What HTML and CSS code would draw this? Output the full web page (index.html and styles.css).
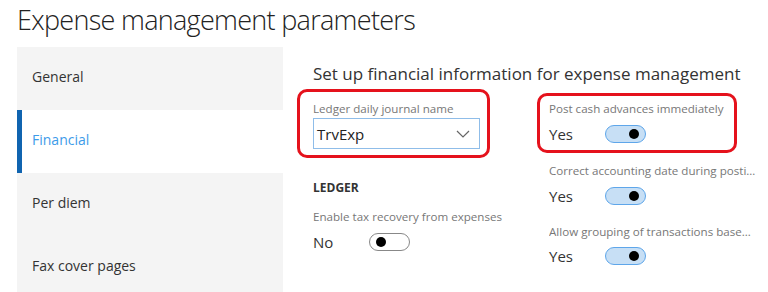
FILE: index.html
```html
<!DOCTYPE html>
<html lang="en">
<head>
    <meta charset="UTF-8">
    <title>Expense management parameters</title>
    <link rel="stylesheet" href="styles.css">
</head>
<body>

<div class="title">Expense management parameters</div>

<div class="layout">
    <div class="nav">
        <div class="nav-item">General</div>
        <div class="nav-item active">Financial</div>
        <div class="nav-item">Per diem</div>
        <div class="nav-item">Fax cover pages</div>
    </div>

    <div class="main">
        <div class="heading">Set up financial information for expense management</div>
        <div class="columns">
            <div class="col col-left">
                <div class="field highlight box-journal">
                    <div class="label">Ledger daily journal name</div>
                    <div class="select">
                        <span>TrvExp</span>
                        <svg width="14" height="8" viewBox="0 0 14 8"><polyline points="1,1 7,7 13,1" fill="none" stroke="#666" stroke-width="1.2"/></svg>
                    </div>
                </div>
                <div class="group-title">LEDGER</div>
                <div class="field field-tax">
                    <div class="label">Enable tax recovery from expenses</div>
                    <div class="value">
                        <span class="value-text">No</span>
                        <span class="toggle"><span class="knob"></span></span>
                    </div>
                </div>
            </div>

            <div class="col col-right">
                <div class="field highlight box-cash">
                    <div class="label">Post cash advances immediately</div>
                    <div class="value">
                        <span class="value-text">Yes</span>
                        <span class="toggle on"><span class="knob"></span></span>
                    </div>
                </div>
                <div class="field field-date">
                    <div class="label">Correct accounting date during posting</div>
                    <div class="value">
                        <span class="value-text">Yes</span>
                        <span class="toggle on"><span class="knob"></span></span>
                    </div>
                </div>
                <div class="field field-group">
                    <div class="label">Allow grouping of transactions based on dimensions</div>
                    <div class="value">
                        <span class="value-text">Yes</span>
                        <span class="toggle on"><span class="knob"></span></span>
                    </div>
                </div>
            </div>
        </div>
    </div>
</div>

</body>
</html>
```

FILE: styles.css
```css
body {
    margin: 0;
    background: #fff;
    font-family: "Open Sans", "Noto Sans", sans-serif;
    color: #333;
    overflow: hidden;
}
.title {
    height: 47px;
    padding-left: 17px;
    font-size: 27px;
    font-weight: 300;
    letter-spacing: -0.7px;
    line-height: 40px;
    color: #222;
}
.layout {
    display: flex;
}
.nav {
    width: 266px;
    margin-left: 17px;
    background: #f4f4f4;
}
.nav-item {
    height: 63px;
    box-sizing: border-box;
    display: flex;
    align-items: center;
    padding-left: 15px;
    padding-bottom: 4px;
    font-size: 14px;
    color: #333;
}
.nav-item.active {
    background: #fff;
    border-left: 5px solid #1064b0;
    padding-left: 10px;
    color: #3d9be9;
}
.main {
    padding-top: 15px;
    padding-left: 14px;
}
.heading {
    padding-left: 16px;
    font-size: 17px;
    line-height: 24px;
    color: #333;
}
.columns {
    display: flex;
    gap: 47px;
}
.col-left {
    width: 193px;
}
.col-right {
    width: 200px;
}
.label {
    font-size: 11.6px;
    line-height: 16px;
    color: #777;
    white-space: nowrap;
    overflow: hidden;
    text-overflow: ellipsis;
}
.highlight {
    border: 3px solid #e5121c;
    border-radius: 10px;
}
.box-journal {
    margin-top: 3px;
    padding: 9px 7px 6px 13px;
}
.select {
    margin-top: 1px;
    height: 31px;
    box-sizing: border-box;
    border: 1px solid #8fbde9;
    display: flex;
    align-items: center;
    justify-content: space-between;
    padding: 0 9px 0 3px;
    font-size: 15px;
    color: #222;
}
.box-cash {
    margin-top: 7px;
    padding: 5px 0 0 9px;
    height: 49px;
}
.value {
    display: flex;
    align-items: center;
    height: 22px;
    margin-top: 6px;
}
.value-text {
    width: 56px;
    font-size: 15px;
    color: #333;
}
.toggle {
    width: 41px;
    height: 18px;
    box-sizing: border-box;
    border: 1.5px solid #888;
    border-radius: 9px;
    background: #fff;
    display: flex;
    align-items: center;
    padding: 0 6px;
}
.toggle.on {
    background: #c7dff5;
    border-color: #5ea6ea;
    justify-content: flex-end;
}
.knob {
    width: 10px;
    height: 10px;
    border-radius: 50%;
    background: #000;
}
.group-title {
    margin-top: 22px;
    padding-left: 16px;
    font-size: 12px;
    font-weight: bold;
    line-height: 16px;
    color: #333;
}
.field-tax {
    padding-left: 16px;
    margin-top: 13px;
    width: 200px;
}
.field-tax .label {
    overflow: visible;
}
.field-date,
.field-group {
    padding-left: 12px;
    width: 208px;
}
.field-date {
    margin-top: 10px;
}
.field-date .value {
    margin-top: 6px;
}
.field-group {
    margin-top: 17px;
}
.field-group .value {
    margin-top: 5px;
}
```
